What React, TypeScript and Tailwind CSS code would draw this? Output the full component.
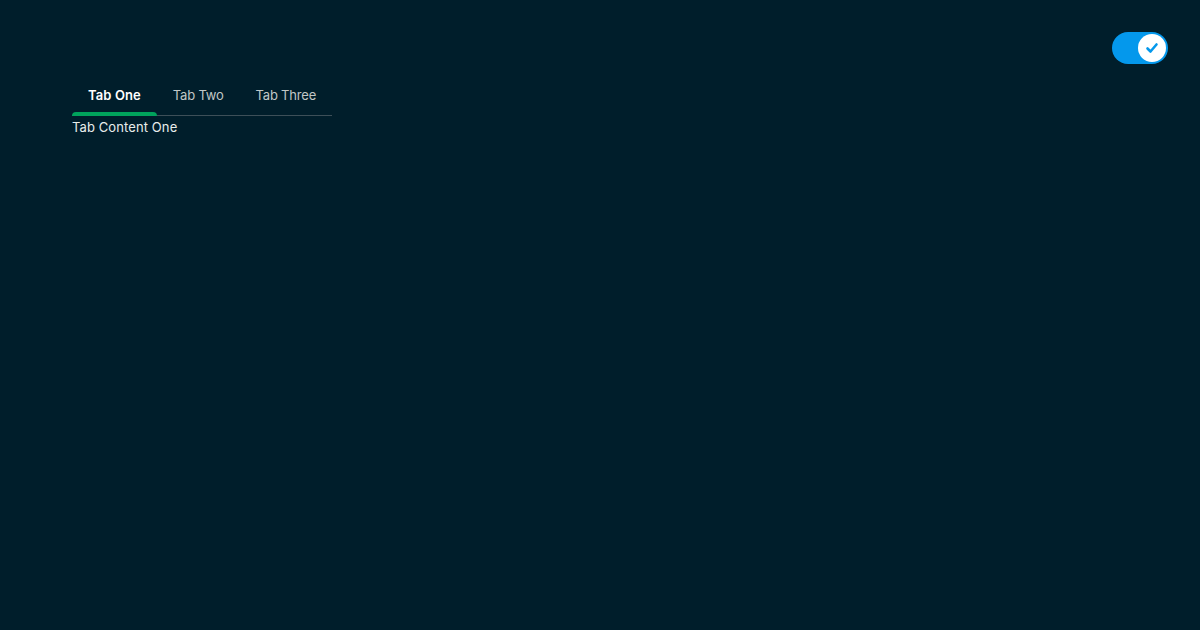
import { useState } from 'react';

const TABS = ['Tab One', 'Tab Two', 'Tab Three'];

export default function App() {
  const [active, setActive] = useState(0);
  const [checked, setChecked] = useState(true);

  return (
    <div
      className="min-h-screen w-full bg-[#001e2b] text-[#e8edeb]"
      style={{ fontFamily: 'Inter, "Noto Sans", sans-serif' }}
    >
      <div className="flex justify-end px-8 pt-8">
        <button
          onClick={() => setChecked((c) => !c)}
          className={`flex h-8 w-14 items-center rounded-full p-[2px] ${checked ? 'justify-end bg-[#0498ec]' : 'justify-start bg-[#5c6c75]'}`}
        >
          <span className="flex h-7 w-7 items-center justify-center rounded-full bg-white">
            {checked && (
              <svg width="16" height="16" viewBox="0 0 16 16" fill="none">
                <path
                  d="M3.5 8.5L6.5 11.5L12.5 4.5"
                  stroke="#0498ec"
                  strokeWidth="2.6"
                  strokeLinecap="round"
                  strokeLinejoin="round"
                />
              </svg>
            )}
          </span>
        </button>
      </div>

      <div className="px-[72px] pt-[11px]">
        <div className="inline-block">
          <div className="flex border-b border-[#3d4f58]">
            {TABS.map((tab, i) => (
              <button
                key={tab}
                onClick={() => setActive(i)}
                className={`relative h-10 px-4 text-[13px] leading-5 ${i === active ? 'font-semibold tracking-[0.1px] text-white' : 'tracking-[-0.2px] text-[#c1c7c6]'}`}
              >
                {tab}
                {i === active && (
                  <span className="absolute bottom-[-1px] left-0 right-0 h-1 rounded-t-sm bg-[#00a35c]" />
                )}
              </button>
            ))}
          </div>
          <div className="pt-[1px] text-[13px] leading-5 tracking-[0.1px]">
            {['Tab Content One', 'Tab Content Two', 'Tab Content Three'][active]}
          </div>
        </div>
      </div>
    </div>
  );
}
